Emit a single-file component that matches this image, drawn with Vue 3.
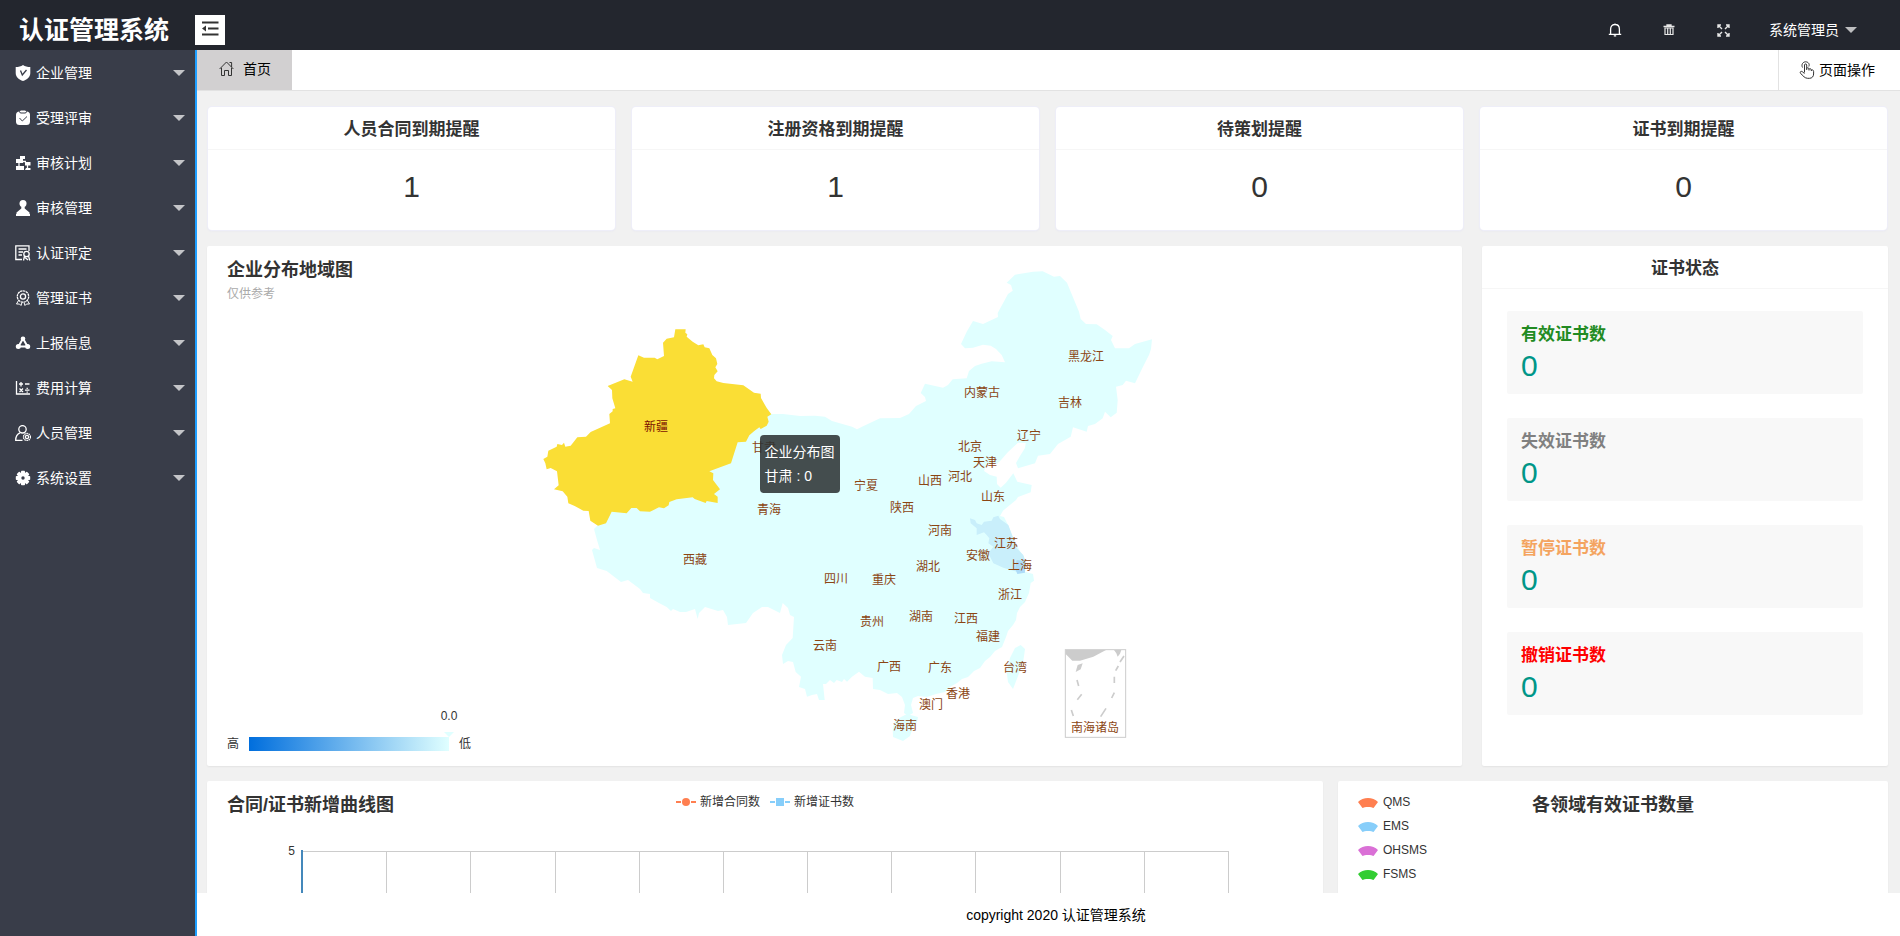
<script setup>
const menu = [
  { icon: 'shield', text: '企业管理' },
  { icon: 'clipboard', text: '受理评审' },
  { icon: 'plan', text: '审核计划' },
  { icon: 'stamp', text: '审核管理' },
  { icon: 'report', text: '认证评定' },
  { icon: 'medal', text: '管理证书' },
  { icon: 'nodes', text: '上报信息' },
  { icon: 'calc', text: '费用计算' },
  { icon: 'person', text: '人员管理' },
  { icon: 'gear', text: '系统设置' }
]
const reminders = [
  { title: '人员合同到期提醒', value: 1 },
  { title: '注册资格到期提醒', value: 1 },
  { title: '待策划提醒', value: 0 },
  { title: '证书到期提醒', value: 0 }
]
const states = [
  { title: '有效证书数', value: 0, kind: 'valid' },
  { title: '失效证书数', value: 0, kind: 'invalid' },
  { title: '暂停证书数', value: 0, kind: 'paused' },
  { title: '撤销证书数', value: 0, kind: 'revoked' }
]
const fields = [
  { name: 'QMS', color: '#ff7f50' },
  { name: 'EMS', color: '#87cefa' },
  { name: 'OHSMS', color: '#da70d6' },
  { name: 'FSMS', color: '#32cd32' }
]
const provinces = [
  ['新疆', 656, 427], ['甘肃', 764, 448], ['青海', 769, 510], ['西藏', 695, 560],
  ['四川', 836, 579], ['重庆', 884, 580], ['贵州', 872, 622], ['云南', 825, 646],
  ['广西', 889, 667], ['广东', 940, 668], ['香港', 958, 694], ['澳门', 931, 705],
  ['海南', 905, 726], ['台湾', 1015, 668], ['南海诸岛', 1095, 728], ['福建', 988, 637],
  ['江西', 966, 619], ['湖南', 921, 617], ['浙江', 1010, 595], ['上海', 1020, 566],
  ['江苏', 1006, 544], ['安徽', 978, 556], ['湖北', 928, 567], ['河南', 940, 531],
  ['陕西', 902, 508], ['山东', 993, 497], ['山西', 930, 481], ['河北', 960, 477],
  ['天津', 985, 463], ['北京', 970, 447], ['辽宁', 1029, 436], ['吉林', 1070, 403],
  ['内蒙古', 982, 393], ['黑龙江', 1086, 357], ['宁夏', 866, 486]
]
const gridLines = Array.from({ length: 11 }, (_, i) => Math.round(302 + (926 * (i + 1)) / 11) + 0.5)
const teeth = [0, 45, 90, 135, 180, 225, 270, 315]
</script>

<template>
  <div class="app">
    <header class="top">
      <h1 class="brand">认证管理系统</h1>
      <button class="toggle" type="button" aria-label="收起菜单">
        <svg width="30" height="30" viewBox="0 0 30 30">
          <path d="M7 7.500H23.500M13 13.500H23.500M7 19.500H23.500" fill="none" stroke="#333" stroke-width="1.800" />
          <path d="M7 13.500L11 10.500V16.500Z" fill="#333" />
        </svg>
      </button>
      <nav class="tools">
        <button type="button" aria-label="消息">
          <svg width="14" height="14" viewBox="0 0 14 14" fill="none" stroke="#fff" stroke-width="1.300">
            <path d="M.8 11.300H13.200M2.600 11V6.200C2.600 3.300 4.500 1.500 7 1.500S11.400 3.300 11.400 6.200V11M5.800 12.800H8.200M7 .4V1.500" />
          </svg>
        </button>
        <button type="button" aria-label="清理缓存">
          <svg width="12" height="12" viewBox="0 0 12 12">
            <path d="M.5 2.500H11.500M4 2V1H8V2" fill="none" stroke="#e8e8e8" stroke-width="1.300" />
            <path d="M2 4H10V10.500H2Z M4.700 4.500V10 M7.300 4.500V10" fill="none" stroke="#e8e8e8" stroke-width="1.200" />
          </svg>
        </button>
        <button type="button" aria-label="全屏">
          <svg width="13" height="13" viewBox="0 0 13 13" fill="none" stroke="#e8e8e8" stroke-width="1.400">
            <path d="M1 4V1H4M1 1L5 5M9 1H12V4M12 1L8 5M1 9V12H4M1 12L5 8M9 12H12V9M12 12L8 8" />
          </svg>
        </button>
      </nav>
      <button class="user" type="button">系统管理员<i class="caret"></i></button>
    </header>

    <aside class="side">
      <a v-for="m in menu" :key="m.text" class="item" href="#">
        <svg class="ico" width="16" height="16" viewBox="0 0 16 16" fill="none" stroke="#fff" stroke-width="1.300">
          <template v-if="m.icon === 'shield'">
            <path d="M8 0C10 1.500 12.500 2 15.300 2V8C15.300 12 12 14.800 8 16C4 14.800 .7 12 .7 8V2C3.500 2 6 1.500 8 0Z" fill="#fff" stroke="none" />
            <path d="M5.500 5.500L7.300 10L11.500 5" stroke="#393d49" stroke-width="1.300" />
          </template>
          <template v-else-if="m.icon === 'clipboard'">
            <rect x="1" y="1.500" width="14" height="13.500" rx="3.500" fill="#fff" stroke="none" />
            <rect x="4.500" y="0" width="7" height="3" rx="1.500" fill="#fff" stroke="#393d49" stroke-width="1" />
            <path d="M4.500 8L7.300 11L12 6.500" stroke="#393d49" stroke-width="1" />
          </template>
          <template v-else-if="m.icon === 'plan'">
            <g fill="#fff" stroke="none">
              <path d="M5 1H10V4H5ZM1 4H8V8H1ZM1 11H9V15H1ZM10 7H15.500V10.500H10ZM11 13H15.500V15H10Z" />
            </g>
            <path d="M4 8V11M12.500 10V14M8 6.500H11" />
          </template>
          <template v-else-if="m.icon === 'stamp'">
            <circle cx="8" cy="3.500" r="3.500" fill="#fff" stroke="none" />
            <path d="M6.300 6H9.700V8.500L14.500 12.500V14H1.500V12.500L6.300 8.500ZM1 14H15V16H1Z" fill="#fff" stroke="none" />
          </template>
          <template v-else-if="m.icon === 'report'">
            <path d="M7 14.500H.8V.8H14V6M3.500 4H11.500M3.500 7H8M3.500 10H7" />
            <circle cx="11.500" cy="9" r="2.700" />
            <path d="M9.500 11L8.500 15.500M13.500 11L14.800 15.500M10 12.500L13 15" />
          </template>
          <template v-else-if="m.icon === 'medal'">
            <circle cx="8" cy="6.500" r="5.700" stroke-dasharray="2.400 .5" />
            <circle cx="8" cy="6.500" r="2.600" />
            <path d="M3.500 10.500L1.500 14L4.500 14L6 15.500L7 12.500M12.500 10.500L14.500 14L11.500 14L10 15.500L9 12.500" stroke-width="1" />
          </template>
          <template v-else-if="m.icon === 'nodes'">
            <path d="M8 3.500L3.500 11.500H12.500Z" stroke-width="2" />
            <g fill="#fff" stroke="none"><circle cx="8" cy="3.800" r="2.300" /><circle cx="3.300" cy="11.500" r="2.500" /><circle cx="12.700" cy="11.500" r="2.500" /></g>
          </template>
          <template v-else-if="m.icon === 'calc'">
            <path d="M1.500 1V14H15M4 4H8M6 2V6.500M10 4H14.500M4.500 8.500L8 12M8 8.500L4.500 12M10 10.200H14.500M12.200 7.800V9M12.200 11.500V12.800" stroke-width="1.300" />
          </template>
          <template v-else-if="m.icon === 'person'">
            <circle cx="7.500" cy="4.300" r="3.700" />
            <path d="M7.500 15.300H.7C.7 11.500 2 9 5 7.800" />
            <circle cx="12" cy="12" r="3.500" stroke-dasharray="1.600 .6" /><circle cx="12" cy="12" r="1.600" />
          </template>
          <template v-else>
            <rect v-for="a in teeth" :key="a" x="6" y=".8" width="4" height="4" rx=".8" fill="#fff" stroke="none" :transform="`rotate(${a} 8 8)`" />
            <circle cx="8" cy="8" r="3.700" stroke-width="4" />
          </template>
        </svg>
        <span>{{ m.text }}</span>
        <i class="caret"></i>
      </a>
    </aside>

    <main class="main">
      <div class="tabs">
        <a class="tab" href="#">
          <svg width="15" height="16" viewBox="0 0 15 16" fill="none" stroke="#333" stroke-width="1">
            <path d="M.6 8L7.500 1L14.400 8M10.500 1.500H12.600V6M2.500 6.800V14.500H5.500V9.500H9.500V14.500H12.500V6.800" />
          </svg>
          首页
        </a>
        <button class="page-ops" type="button">
          <svg width="16" height="18" viewBox="0 0 16 18" fill="none" stroke="#333" stroke-width="1">
            <path d="M5.500 11.500V4C5.500 2.600 7.700 2.600 7.700 4V9M7.700 7.500C8 6.300 10 6.600 10 8V9.500M10 8.300C10.400 7.200 12.300 7.600 12.300 9V10M12.300 9.300C13 8.400 14.600 9 14.600 10.300V13C14.600 15.500 13 17.300 10.500 17.300H8.500C6 17.300 3.800 14.800 1.500 12.200C.6 11 2 9.800 3.200 10.600L5.500 12.500" />
            <path d="M3.500 6.500C2 3.500 4 .8 6.600 .8S11 3 9.800 5.500" />
          </svg>
          页面操作
        </button>
      </div>

      <div class="content">
        <section class="reminders">
          <article v-for="r in reminders" :key="r.title" class="card reminder">
            <h2 class="card-head">{{ r.title }}</h2>
            <p class="count">{{ r.value }}</p>
          </article>
        </section>

        <section class="overview">
          <article class="card map-card">
            <svg class="map" viewBox="207 246 1255 520" role="img" aria-label="企业分布地域图">
              <g fill="#e0ffff">
                <path d="M771 414L783 414L800 416L815 415.700L825 416.700L832 421L852 426.700L857 429.300L862 426.700L880 418.300L900 418L909 414L916 406L926 401L925 397L920.700 393L925 383.700L943 387.700L948 385L952.700 379.300L966.700 378.300L969 371L975 366L981.700 363.700L991.700 361.300L1005 362.300L1001.700 355L996 349L990.700 345.700L983 344.700L973 347.700L965 348.300L961 344L966.700 331.700L973 321L983 324L998 317L997.700 313L1008 294L1012.700 290.700L1011 285L1006.700 282.700L1015 274.700L1033 271.700L1042.700 271.300L1054 276.700L1060 276L1067 282.700L1070.700 291.700L1079 311.700L1080.700 319L1086 324L1096.700 324.300L1105 330L1112.700 336L1111 340L1115 348.300L1129 348.300L1135 344L1152 339.300L1151 349L1149 355L1143 366.700L1135 383.300L1126 380.700L1122.700 385L1116 386.700L1117.700 400L1116.700 412.700L1110.700 417.300L1105 411.700L1102.700 418.300L1095 424L1088 426L1086.700 431.700L1073 427.300L1070.700 436.700L1058 444L1050 454L1038 455.700L1035 463.300L1018 468.300L1016 463L1020 456L1025 448L1025.700 443L1018 442.700L1008 452L1001 460L997 464L987 464L984 471L990 475L996.700 476.700L997 484L1000.700 487.700L1006 482.700L1013.300 473.300L1017.300 481.700L1031.700 485L1030.700 492.300L1018 497L1016 500L1003 510.700L1000 516L1004 517L1008 525L1013 538L1023 556.700L1025.700 562L1025 571.700L1033 574L1034 580.700L1030.700 583L1029 593L1025 602L1020 607L1017 613L1016 620L1013 625L1008 631L1006 637L1002 647L995 651L990 657L985 661L980 668L974 671L968 677L962 679L957 683L950 687L945 692L936 694L927 697L918 696L913 698L911 705L913 713L908 716L904 713L905 705L902 697L897 693L888 694L880 690L873 689L872.700 678L865 676.700L859 671.700L852 676.700L847 681.700L844 679L842 682L836.700 680L834 683L830 680L826 684L823 684L824.700 700L819 700L817 694L812 695L807 696.700L805 689L799 687L801 676.700L795.700 672L793 662L788 661L783 664L782 655L786 645L792.700 638L794 617L790 615L788 608L782.700 603L780 613L774 610L768 607L762 607L753 613L746 623L728 625L727 617L723 610L718 611L705 607L699 613L697.700 619L695 609L686 612L680 612L673 609L671 611L666.700 607L659 603L650 598L650 594L643 593L640 589L628 580L621 582L606.700 571L597 568L592 550L594 548L600 550L597 540L594 529L598 525L606 518L612 508L660 500L680 490L700 480L700 460L740 430L765 405Z" />
                <path d="M895 721L901 717L907 714L918 717L917 722L912 730L910 736L903 741L893 737L892.700 728Z" />
                <path d="M1020.700 645L1025 649L1023 663L1013 689L1008 682L1006.700 672L1010 658L1015 648Z" />
              </g>
              <g transform="translate(530 310) scale(.33333)">
                <path fill="#fade35" d="M436 58L467 58L466 68L472 73L470 80L488 95L505 106L520 103L524 112L538 115L547 135L558 145L562 162L556 172L563 184L553 195L552 205L560 214L580 219L640 226L672 248L692 251L693 264L710 294L724 313L712 320L716 335L710 347L692 357L688 352L672 364L658 376L648 395L623 397L603 460L538 484L550 490L549 510L570 538L552 552L563 560L563 579L530 573L527 579L494 567L488 562L440 568L418 576L416 586L402 595L387 592L360 605L330 604L320 594L304 594L290 610L245 605L228 640L204 647L181 632L176 603L160 602L134 588L115 580L112 560L98 544L72 538L86 526L81 484L62 474L50 478L46 460L40 447L52 440L55 422L80 410L82 402L96 405L102 398L106 410L122 407L142 382L168 380L182 366L240 340L238 312L248 304L248 297L256 295L247 265L246 240L233 228L283 208L308 215L302 200L325 136L342 143L374 143L382 148L402 138L399 98L410 86L432 82Z" />
              </g>
              <g transform="translate(860 500) scale(.33333)">
                <path fill="#c9effb" d="M330 55L345 60L350 70L365 75L372 65L395 62L400 52L415 47L420 57L445 75L460 115L470 145L490 165L497 185L495 215L470 215L430 203L400 190L390 170L385 160L400 140L385 130L388 115L380 105L372 97L350 105L350 85L332 70Z" />
                <path fill="#aedcf8" d="M470 180L495 183L495 218L472 222L465 205Z" />
                <rect x="616" y="449" width="181" height="263" fill="#fff" stroke="#ccc" stroke-width="3" />
                <g fill="#ccc">
                  <path d="M617 450H738L700 470L660 482L637 482L617 462Z" />
                  <path d="M762 450H784L780 461L773 470L769 460Z" />
                  <path d="M653 495L668 490L662 508L647 516Z" />
                </g>
                <path d="M651 540L656 558M665 583L652 599M634 630L640 648M738 625L722 650M763 530V549M763 578L755 594M775 498L767 512M792 468L780 486" stroke="#ccc" stroke-width="5" />
              </g>
              <g class="labels">
                <text v-for="p in provinces" :key="p[0]" :class="{ active: p[0] === '新疆' }" :x="p[1]" :y="p[2] + 4">{{ p[0] }}</text>
              </g>
            </svg>
            <div class="chart-title">
              <h2>企业分布地域图</h2>
              <p>仅供参考</p>
            </div>
            <div class="scale">
              <span>高</span>
              <div class="ramp"><span class="mark">0.0</span></div>
              <span>低</span>
            </div>
            <div class="tooltip">企业分布图<br />甘肃 : 0</div>
          </article>

          <article class="card">
            <h2 class="card-head">证书状态</h2>
            <ul class="states">
              <li v-for="s in states" :key="s.title" :class="s.kind">
                <h3>{{ s.title }}</h3>
                <p>{{ s.value }}</p>
              </li>
            </ul>
          </article>
        </section>

        <section class="trends">
          <article class="card line-card">
            <svg class="plot" viewBox="207 781 1116 400">
              <path :d="'M302 851.5H1228.5' + gridLines.map(x => `M${x} 851V1110`).join('')" fill="none" stroke="#ccc" stroke-width="1" />
              <path d="M302 850V1110" stroke="#48b" stroke-width="2" />
              <text x="295" y="855" text-anchor="end">5</text>
            </svg>
            <div class="chart-title"><h2>合同/证书新增曲线图</h2></div>
            <div class="legend">
              <span><svg width="20" height="10" viewBox="0 0 20 10"><path d="M0 5H5M15 5H20" stroke="#ff7f50" stroke-width="2" /><circle cx="10" cy="5" r="4" fill="#ff7f50" /></svg>新增合同数</span>
              <span><svg width="20" height="10" viewBox="0 0 20 10"><path d="M0 5H5M15 5H20" stroke="#87cefa" stroke-width="2" /><rect x="6" y="1" width="8" height="8" fill="#87cefa" /></svg>新增证书数</span>
            </div>
          </article>
          <article class="card field-card">
            <h2>各领域有效证书数量</h2>
            <ul>
              <li v-for="f in fields" :key="f.name">
                <svg width="20" height="12" viewBox="0 0 20 12"><path d="M0 6C5 .5 15 .5 20 6L15.500 12C14 10.500 6 10.500 4.500 12Z" :fill="f.color" /></svg>
                {{ f.name }}
              </li>
            </ul>
          </article>
        </section>
      </div>

      <footer class="foot">copyright 2020 认证管理系统</footer>
    </main>
  </div>
</template>

<style>
body {
  margin: 0;
  overflow: hidden;
}
</style>

<style scoped>
.app {
  display: grid;
  grid-template: 50px minmax(0, 1fr) / 197px minmax(0, 1fr);
  height: 100vh;
  font: 14px/24px "Liberation Sans", "Noto Sans CJK SC", sans-serif;
  color: #333;
}
h1, h2, h3, p, ul { margin: 0; padding: 0; }
ul { list-style: none; }
a { text-decoration: none; }
button {
  border: 0;
  padding: 0;
  background: none;
  font: inherit;
  color: inherit;
  display: flex;
  align-items: center;
  cursor: pointer;
}
svg { display: block; flex: none; }
.caret {
  border: 6px solid transparent;
  border-top-color: rgba(255, 255, 255, .7);
  border-bottom: 0;
}
.top {
  grid-column: 1 / -1;
  display: flex;
  align-items: center;
  padding: 10px 43px 0 19px;
  background: #23262e;
  color: #fff;
}
.brand { font-size: 25px; line-height: 40px; width: 176px; }
.toggle { background: #fff; width: 30px; height: 30px; }
.tools { display: flex; margin-left: auto; margin-right: 19px; }
.tools button { width: 54px; height: 40px; justify-content: center; }
.user { gap: 6px; }
.side {
  background: #393d49;
  border-right: 2px solid #1e9fff;
}
.item {
  display: flex;
  align-items: center;
  height: 45px;
  padding: 0 10px 0 15px;
  color: #fff;
}
.item span { margin-left: 5px; }
.item .caret { margin-left: auto; }
.main {
  display: flex;
  flex-direction: column;
  min-width: 0;
  background: #f1f1f1;
}
.tabs {
  display: flex;
  justify-content: space-between;
  flex: none;
  height: 40px;
  background: #fff;
  border-bottom: 1px solid #e2e2e2;
  color: #000;
}
.tab {
  display: flex;
  align-items: center;
  gap: 9px;
  padding: 0 21px 2px 22px;
  background: #d2d0d1;
  color: #000;
}
.page-ops {
  gap: 4px;
  padding: 0 25px 0 20px;
  border-left: 1px solid #e2e2e2;
}
.content {
  flex: 1;
  min-height: 0;
  overflow: auto;
  scrollbar-width: none;
  padding: 16px 12px 0 10px;
}
.card {
  background: #fff;
  border-radius: 2px;
  box-shadow: 0 1px 2px rgba(0, 0, 0, .06);
  min-width: 0;
}
.card-head {
  height: 42px;
  line-height: 46px;
  border-bottom: 1px solid #f6f6f6;
  font-size: 17px;
  text-align: center;
}
.reminders {
  display: grid;
  grid-template-columns: repeat(4, minmax(0, 1fr));
  gap: 17px;
  margin: 0 1px 16px;
}
.reminder {
  border-radius: 4px;
  box-shadow: 0 0 0 1px #eeeef8, 0 1px 2px #e4e5f0;
}
.count {
  font-size: 30px;
  line-height: 40px;
  padding: 17px 0 23px;
  text-align: center;
}
.overview {
  display: grid;
  grid-template-columns: minmax(0, 1255fr) minmax(0, 406fr);
  gap: 20px;
  margin-bottom: 15px;
}
.map-card, .line-card {
  display: grid;
  position: relative;
}
.map-card > *, .line-card > * { grid-area: 1 / 1; }
.map { width: 100%; }
.labels {
  font-size: 12px;
  fill: #8b4513;
  text-anchor: middle;
}
.labels .active { fill: #7a1000; }
.chart-title {
  justify-self: start;
  align-self: start;
  padding: 12px 20px;
}
.chart-title h2, .field-card h2 {
  font-size: 18px;
  line-height: 24px;
}
.chart-title p {
  font-size: 12px;
  line-height: 24px;
  color: #aaa;
}
.scale {
  display: flex;
  align-items: center;
  gap: 10px;
  align-self: end;
  justify-self: start;
  padding: 0 20px 15px;
  font-size: 12px;
  line-height: 14px;
}
.ramp {
  position: relative;
  width: 200px;
  height: 14px;
  background: linear-gradient(90deg, #006edd, #e0ffff);
}
.mark {
  position: absolute;
  right: -20px;
  bottom: 28px;
  width: 40px;
  text-align: center;
}
.ramp::after {
  content: "";
  position: absolute;
  right: -5px;
  bottom: 14px;
  border: 5px solid transparent;
  border-top-color: #e0ffff;
  border-bottom: 0;
}
.tooltip {
  position: absolute;
  left: calc(50% - 75px);
  top: 189px;
  padding: 5px;
  border-radius: 4px;
  background: rgba(45, 50, 52, .87);
  color: #fff;
}
.states {
  display: grid;
  gap: 24px;
  padding: 22px 25px 51px;
}
.states li {
  padding: 11px 15px 10px 14px;
  border-radius: 2px;
  background: #f8f8f8;
}
.states h3 { font-size: 17px; line-height: 26px; }
.states p { font-size: 30px; line-height: 36px; color: #009688; }
.valid h3 { color: #228b22; }
.invalid h3 { color: #808080; }
.paused h3 { color: #f4a460; }
.revoked h3 { color: #f00; }
.trends {
  display: grid;
  grid-template-columns: minmax(0, 1116fr) minmax(0, 550fr);
  gap: 15px;
}
.plot { width: 100%; font-size: 12px; fill: #333; }
.legend {
  display: flex;
  gap: 10px;
  justify-self: center;
  align-self: start;
  padding-top: 11px;
  font-size: 12px;
  line-height: 20px;
}
.legend span { display: flex; align-items: center; gap: 4px; }
.field-card {
  display: grid;
  align-items: start;
  align-content: start;
}
.field-card > * { grid-area: 1 / 1; }
.field-card h2 { padding-top: 12px; text-align: center; }
.field-card ul { padding: 9px 20px; font-size: 12px; }
.field-card li { display: flex; align-items: center; gap: 5px; }
.foot {
  flex: none;
  padding-left: 15px;
  height: 43px;
  line-height: 45px;
  background: #fff;
  color: #000;
  text-align: center;
}
</style>
